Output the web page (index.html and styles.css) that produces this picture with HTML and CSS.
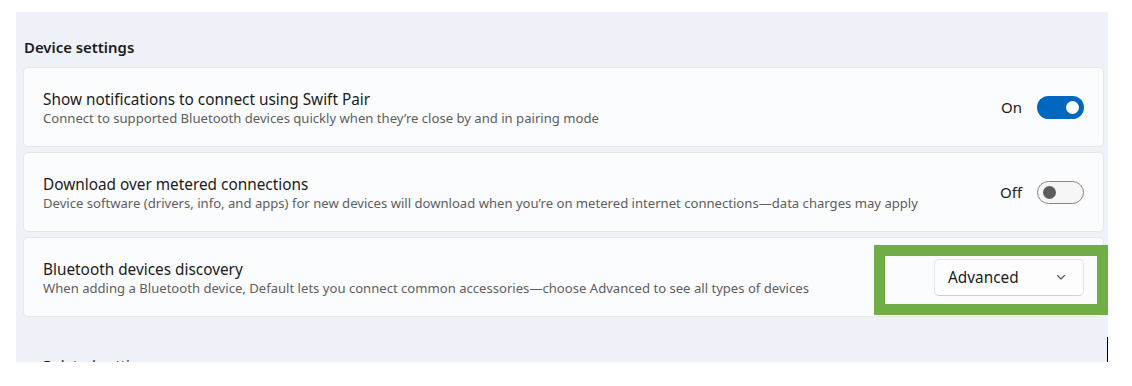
FILE: index.html
```html
<!DOCTYPE html>
<html>
<head>
<meta charset="utf-8">
<link rel="stylesheet" href="styles.css">
</head>
<body>
<div class="panel">
  <h2 class="section-title">Device settings</h2>
  <div class="card">
    <div class="text">
      <div class="title">Show notifications to connect using Swift Pair</div>
      <div class="desc">Connect to supported Bluetooth devices quickly when they’re close by and in pairing mode</div>
    </div>
    <div class="control">
      <span class="state">On</span>
      <span class="toggle on"><span class="knob"></span></span>
    </div>
  </div>
  <div class="card">
    <div class="text">
      <div class="title">Download over metered connections</div>
      <div class="desc">Device software (drivers, info, and apps) for new devices will download when you’re on metered internet connections—data charges may apply</div>
    </div>
    <div class="control">
      <span class="state">Off</span>
      <span class="toggle off"><span class="knob"></span></span>
    </div>
  </div>
  <div class="card">
    <div class="text">
      <div class="title">Bluetooth devices discovery</div>
      <div class="desc">When adding a Bluetooth device, Default lets you connect common accessories—choose Advanced to see all types of devices</div>
    </div>
    <div class="control">
      <div class="dropdown">
        <span>Advanced</span>
        <svg width="12" height="12" viewBox="0 0 12 12"><path d="M2.5 4.5 L6 8 L9.5 4.5" fill="none" stroke="#555" stroke-width="1.1" stroke-linecap="round" stroke-linejoin="round"/></svg>
      </div>
    </div>
  </div>
  <h2 class="section-title next">Related settings</h2>
  <div class="highlight"></div>
  <div class="cursor"></div>
</div>
</body>
</html>
```

FILE: styles.css
```css
html, body {
  margin: 0;
  padding: 0;
  background: #ffffff;
}
body {
  font-family: "Noto Sans", "Open Sans", sans-serif;
  color: #1b1b1b;
}
.panel {
  position: relative;
  margin: 12px 0 0 16px;
  width: 1092px;
  height: 350px;
  background: #eef2f8;
  overflow: hidden;
  padding: 0 4px 0 7px;
  box-sizing: border-box;
}
.section-title {
  margin: 0;
  padding: 25px 0 10px 1px;
  font-size: 14.9px;
  font-weight: 600;
  line-height: 20px;
  color: #1b1b1b;
}
.section-title.next {
  padding: 33px 0 0 20px;
  font-weight: 400;
}
.card {
  display: flex;
  align-items: center;
  justify-content: space-between;
  height: 80px;
  box-sizing: border-box;
  background: #fbfcfd;
  border: 1px solid #e3e6ea;
  border-radius: 5px;
  padding: 0 19px 0 19px;
  margin-bottom: 5px;
}
.text {
  display: flex;
  flex-direction: column;
  padding-top: 2px;
}
.title {
  font-size: 15.35px;
  line-height: 20px;
  color: #1b1b1b;
}
.desc {
  font-size: 13.1px;
  line-height: 18px;
  color: #5e5e5e;
}
.control {
  display: flex;
  align-items: center;
  gap: 15px;
}
.state {
  font-size: 15px;
  color: #1b1b1b;
}
.toggle {
  display: flex;
  align-items: center;
  width: 47px;
  height: 23px;
  box-sizing: border-box;
  border-radius: 12px;
}
.toggle.on {
  background: #0067c0;
  justify-content: flex-end;
  padding-right: 5px;
}
.toggle.on .knob {
  width: 13px;
  height: 13px;
  border-radius: 50%;
  background: #ffffff;
}
.toggle.off {
  border: 1px solid #868686;
  background: #f6f6f6;
  padding-left: 5px;
}
.toggle.off .knob {
  width: 13px;
  height: 13px;
  border-radius: 50%;
  background: #5d5d5d;
}
.dropdown {
  display: flex;
  align-items: center;
  justify-content: space-between;
  width: 150px;
  height: 37px;
  box-sizing: border-box;
  padding: 0 16px 0 13px;
  background: #fdfdfe;
  border: 1px solid #e2e4e7;
  border-bottom-color: #cfd1d4;
  border-radius: 5px;
  font-size: 15.35px;
  color: #1b1b1b;
}
.dropdown svg {
  display: block;
}
.highlight {
  position: absolute;
  left: 858px;
  top: 233px;
  width: 234px;
  height: 70px;
  box-sizing: border-box;
  border: 11px solid #70ad47;
}
.cursor {
  position: absolute;
  left: 1091px;
  top: 325px;
  width: 2px;
  height: 25px;
  background: #000;
}
```
